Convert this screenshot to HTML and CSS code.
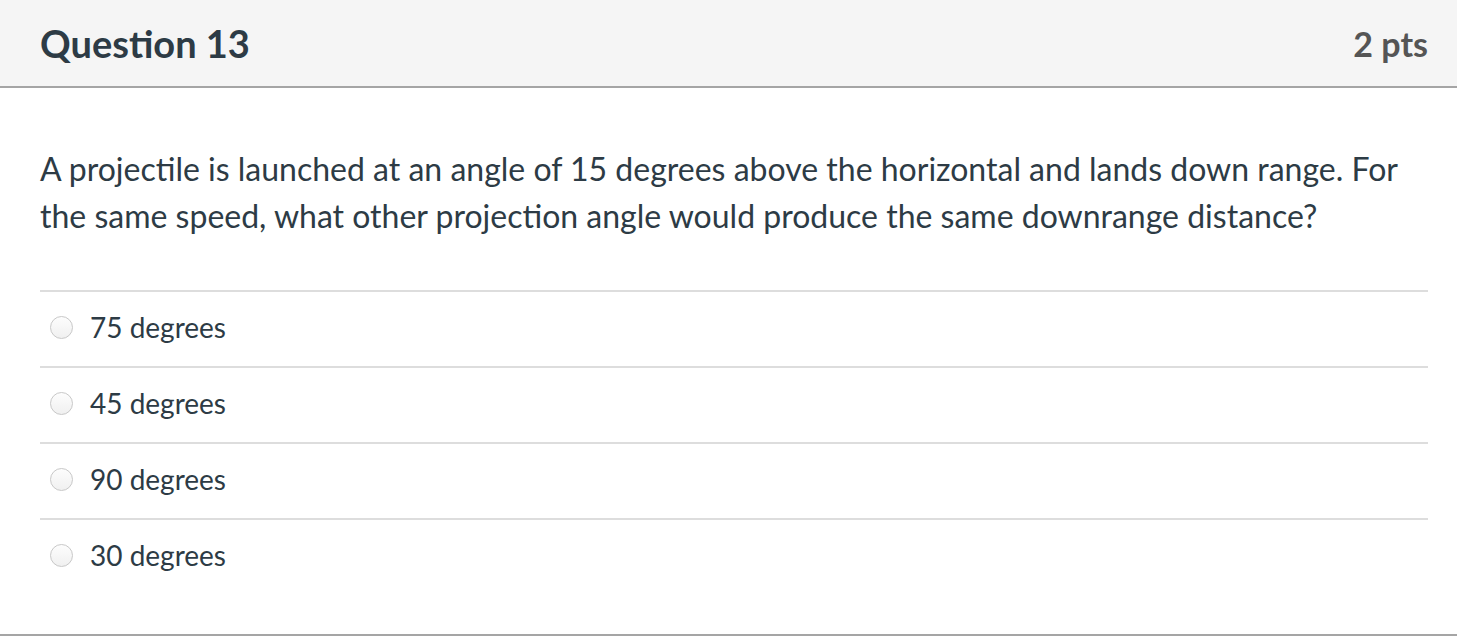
FILE: index.html
```html
<!DOCTYPE html>
<html>
<head>
<meta charset="utf-8">
<link rel="stylesheet" href="styles.css">
</head>
<body>
<div class="question">
  <div class="header">
    <h2 class="title">Question 13</h2>
    <span class="pts">2 pts</span>
  </div>
  <div class="content">
    <p class="text">A projectile is launched at an angle of 15 degrees above the horizontal and lands down range. For the same speed, what other projection angle would produce the same downrange distance?</p>
    <div class="answers">
      <label class="answer"><span class="radio"></span><span class="label">75 degrees</span></label>
      <label class="answer"><span class="radio"></span><span class="label">45 degrees</span></label>
      <label class="answer"><span class="radio"></span><span class="label">90 degrees</span></label>
      <label class="answer"><span class="radio"></span><span class="label">30 degrees</span></label>
    </div>
  </div>
</div>
</body>
</html>
```
FILE: styles.css
```css
html, body {
  margin: 0;
  padding: 0;
  background: #fff;
}
body {
  font-family: Lato, "Open Sans", sans-serif;
  color: #2d3b45;
}
.question {
  width: 1457px;
  height: 636px;
  box-sizing: border-box;
  border-bottom: 2px solid #a5a5a5;
}
.header {
  height: 86px;
  background: #f5f5f5;
  border-bottom: 2px solid #a5a5a5;
  display: flex;
  align-items: center;
  justify-content: space-between;
  padding: 0 29px 0 40px;
}
.title {
  margin: 0;
  font-size: 38px;
  font-weight: 700;
  color: #2d3b45;
}
.pts {
  font-size: 34px;
  font-weight: 700;
  color: #555;
}
.content {
  padding: 0 29px 0 40px;
}
.text {
  margin: 0;
  padding: 57px 0 51px;
  font-size: 32px;
  line-height: 47px;
}
.answers {
  display: flex;
  flex-direction: column;
}
.answer {
  display: flex;
  align-items: center;
  height: 70px;
  padding-bottom: 4px;
  border-top: 2px solid #dddddd;
}
.radio {
  width: 21px;
  height: 21px;
  border-radius: 50%;
  border: 1px solid #c8c8c8;
  background: linear-gradient(#fdfdfd, #f0f0f0);
  margin: 0 17px 0 10px;
  flex: none;
}
.label {
  font-size: 28px;
}
```
